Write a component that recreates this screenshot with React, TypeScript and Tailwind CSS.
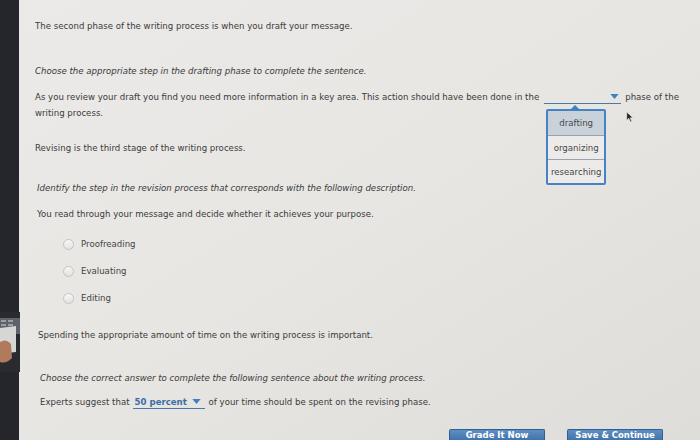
import React from "react";

const font = { fontFamily: '"DejaVu Sans", Verdana, sans-serif' };

const Arrow = ({ className = "" }: { className?: string }) => (
  <svg viewBox="0 0 10 6" className={className}>
    <path d="M0 0 L10 0 L5 6 Z" fill="#3f7fc4" />
  </svg>
);

const Radio = ({ label }: { label: string }) => (
  <div className="flex h-4 items-center">
    <span className="ml-[28px] h-[11px] w-[11px] rounded-full border border-[#c4c4c2] bg-gradient-to-b from-[#f7f7f6] to-[#e2e2e0]" />
    <span className="ml-[7px] text-[8.6px] text-[#444]">{label}</span>
  </div>
);

// photo of a hand/keyboard bleeding into the left edge
const EdgePhoto = () => (
  <svg viewBox="0 0 20 60" className="mt-[312px] h-[60px] w-[20px]">
    <rect width="20" height="60" fill="#2a2b30" />
    <rect x="0" y="6" width="20" height="16" fill="#5f6268" />
    <rect x="1" y="8" width="5" height="2" fill="#9aa0a8" />
    <rect x="8" y="8" width="5" height="2" fill="#9aa0a8" />
    <rect x="1" y="12" width="5" height="2" fill="#9aa0a8" />
    <rect x="8" y="12" width="5" height="2" fill="#9aa0a8" />
    <path d="M0 16 L16 14 L16 40 L0 42 Z" fill="#d6d6d5" />
    <path d="M0 30 Q6 26 11 32 L12 46 Q6 52 0 50 Z" fill="#b27a5c" />
  </svg>
);

export default function App() {
  return (
    <div
      className="relative flex h-[440px] w-[700px] overflow-hidden bg-gradient-to-br from-[#ebeae8] via-[#e7e6e3] to-[#dfddd9]"
      style={font}
    >
      {/* dark screen bezel on the left */}
      <div className="flex w-[19px] shrink-0 flex-col bg-[#24262b]">
        <EdgePhoto />
      </div>

      <div className="flex flex-1 flex-col pl-[16px] leading-4 text-[#3b3b3b]">
        <p className="mt-[18px] text-[8.6px]">
          The second phase of the writing process is when you draft your message.
        </p>

        <p className="mt-[29px] text-[8.6px] italic">
          Choose the appropriate step in the drafting phase to complete the sentence.
        </p>

        <div className="mt-[10px] text-[8.6px]">
          <div className="flex items-center whitespace-nowrap">
            <span>
              As you review your draft you find you need more information in a key area. This
              action should have been done in the
            </span>
            <span className="relative ml-[5px] inline-flex h-[14px] w-[77px] items-center justify-end border-b border-[#4a78a8] pr-[2px]">
              <Arrow className="h-[5px] w-[9px]" />
              <span className="absolute left-[2px] top-[19px] z-10 w-[60px]">
                <svg viewBox="0 0 10 5" className="absolute -top-[4px] left-[24px] h-[5px] w-[10px]">
                  <path d="M0 5 L5 0 L10 5 Z" fill="#3f7fc4" />
                </svg>
                <span className="flex flex-col overflow-hidden rounded-[2px] border-2 border-[#4683c4] bg-[#ecebe9] text-center text-[#474747]">
                  <span className="h-[24px] bg-[#c9d2da] leading-[24px]">drafting</span>
                  <span className="h-[24px] border-t border-[#9aa3ab] leading-[24px]">organizing</span>
                  <span className="h-[24px] border-t border-[#9aa3ab] leading-[24px]">researching</span>
                </span>
              </span>
            </span>
            <span className="ml-[4px]">phase of the</span>
          </div>
          <div>writing process.</div>
        </div>

        <p className="mt-[19px] text-[8.6px]">Revising is the third stage of the writing process.</p>

        <p className="ml-[2px] mt-[24px] text-[8.6px] italic">
          Identify the step in the revision process that corresponds with the following description.
        </p>

        <p className="ml-[2px] mt-[10px] text-[8.6px]">
          You read through your message and decide whether it achieves your purpose.
        </p>

        <div className="mt-[14px] flex flex-col gap-[11px]">
          <Radio label="Proofreading" />
          <Radio label="Evaluating" />
          <Radio label="Editing" />
        </div>

        <p className="ml-[3px] mt-[21px] text-[8.6px]">
          Spending the appropriate amount of time on the writing process is important.
        </p>

        <p className="ml-[5px] mt-[27px] text-[8.6px] italic">
          Choose the correct answer to complete the following sentence about the writing process.
        </p>

        <div className="ml-[5px] mt-[8px] flex items-center whitespace-nowrap text-[8.6px]">
          <span>Experts suggest that</span>
          <span className="ml-[3px] inline-flex h-[14px] w-[72px] items-center justify-between border-b border-[#4a78a8] pl-[2px] pr-[4px] font-bold text-[#3b6ea8]">
            50 percent
            <Arrow className="h-[5px] w-[9px]" />
          </span>
          <span className="ml-[4px]">of your time should be spent on the revising phase.</span>
        </div>

        <div className="ml-[414px] mt-[19px] flex gap-[22px]">
          <button className="h-[11px] w-[96px] rounded-t-[2px] border border-b-0 border-[#2f5f92] bg-gradient-to-b from-[#5d8fc4] to-[#4274aa] text-[8.5px] font-bold leading-[10px] text-white">
            Grade It Now
          </button>
          <button className="h-[11px] w-[96px] rounded-t-[2px] border border-b-0 border-[#2f5f92] bg-gradient-to-b from-[#5d8fc4] to-[#4274aa] text-[8.5px] font-bold leading-[10px] text-white">
            Save &amp; Continue
          </button>
        </div>
      </div>

      {/* mouse pointer */}
      <svg viewBox="0 0 10 14" className="absolute left-[626px] top-[111px] h-[12px] w-[8px]">
        <path d="M1 1 L1 11 L3.5 8.5 L5.5 13 L7 12.3 L5 8 L8.5 8 Z" fill="#222" stroke="#eee" strokeWidth="0.6" />
      </svg>
    </div>
  );
}
